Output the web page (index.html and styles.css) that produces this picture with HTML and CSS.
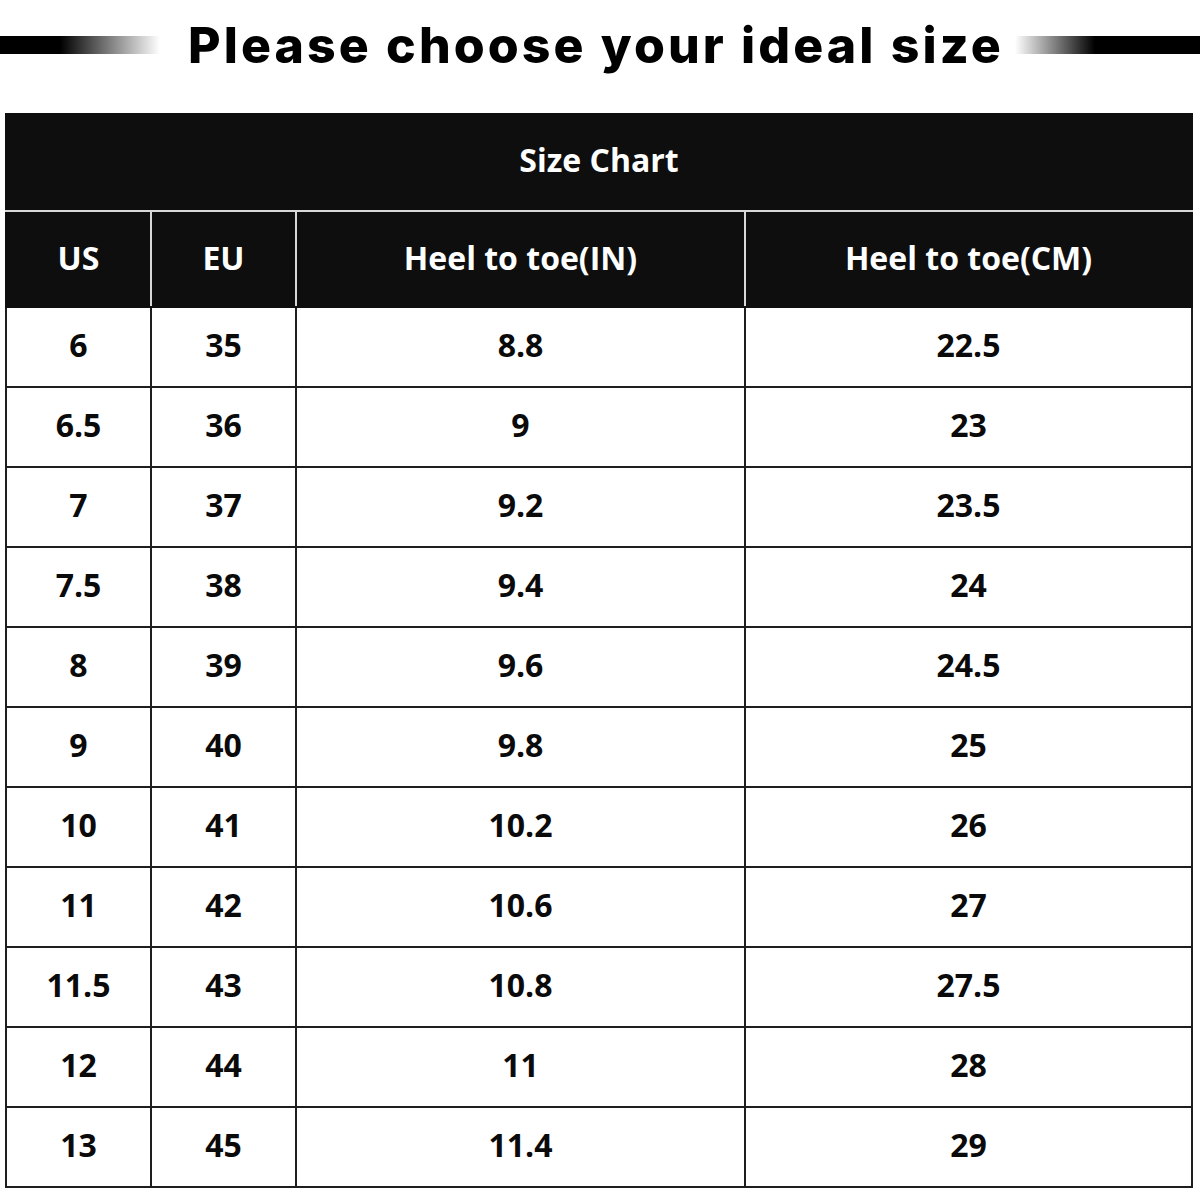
FILE: index.html
```html
<!DOCTYPE html>
<html>
<head>
<meta charset="utf-8">
<link rel="stylesheet" href="styles.css">
</head>
<body>
<div class="heading">
  <div class="bar bar-left"></div>
  <h1 class="title">Please choose your ideal size</h1>
  <div class="bar bar-right"></div>
</div>
<table class="chart">
  <colgroup>
    <col class="c-us"><col class="c-eu"><col class="c-in"><col class="c-cm">
  </colgroup>
  <thead>
    <tr class="caption-row"><th colspan="4">Size Chart</th></tr>
    <tr class="head-row"><th>US</th><th>EU</th><th>Heel to toe(IN)</th><th>Heel to toe(CM)</th></tr>
  </thead>
  <tbody>
    <tr><td>6</td><td>35</td><td>8.8</td><td>22.5</td></tr>
    <tr><td>6.5</td><td>36</td><td>9</td><td>23</td></tr>
    <tr><td>7</td><td>37</td><td>9.2</td><td>23.5</td></tr>
    <tr><td>7.5</td><td>38</td><td>9.4</td><td>24</td></tr>
    <tr><td>8</td><td>39</td><td>9.6</td><td>24.5</td></tr>
    <tr><td>9</td><td>40</td><td>9.8</td><td>25</td></tr>
    <tr><td>10</td><td>41</td><td>10.2</td><td>26</td></tr>
    <tr><td>11</td><td>42</td><td>10.6</td><td>27</td></tr>
    <tr><td>11.5</td><td>43</td><td>10.8</td><td>27.5</td></tr>
    <tr><td>12</td><td>44</td><td>11</td><td>28</td></tr>
    <tr><td>13</td><td>45</td><td>11.4</td><td>29</td></tr>
  </tbody>
</table>
</body>
</html>
```
FILE: styles.css
```css
html, body {
  margin: 0;
  padding: 0;
  background: #ffffff;
}
body {
  width: 1200px;
  height: 1200px;
  overflow: hidden;
}
.heading {
  display: flex;
  align-items: center;
  height: 90px;
  margin-bottom: 23px;
}
.bar {
  height: 18px;
  flex: 0 0 auto;
}
.bar-left {
  width: 160px;
  background: linear-gradient(to right, #000 0, #000 60px, #fff 160px);
}
.bar-right {
  width: 185px;
  margin-left: auto;
  background: linear-gradient(to right, #fff 0, #000 80px, #000 100%);
}
.title {
  margin: 0 0 0 28px;
  font-family: "Inter", "DejaVu Sans", sans-serif;
  font-weight: 800;
  font-size: 50px;
  letter-spacing: 3.1px;
  color: #000;
  white-space: nowrap;
  line-height: 90px;
}
.chart {
  margin-left: 5px;
  width: 1186px;
  border-collapse: collapse;
  table-layout: fixed;
  font-family: "Open Sans", "Noto Sans", sans-serif;
  font-weight: 700;
  font-size: 32px;
  line-height: 40px;
}
.c-us, .c-eu { width: 145px; }
.c-in { width: 449px; }
.c-cm { width: 447px; }
.chart th {
  background: #0e0e0e;
  color: #ffffff;
  font-weight: 700;
  text-align: center;
  border: 2px solid #d8d8d8;
}
.caption-row th {
  height: 90px;
  padding: 0 0 5px 0;
  border-color: #0e0e0e;
  border-bottom-color: #d8d8d8;
}
.head-row th {
  height: 91px;
  padding: 0 0 3px 0;
  border-bottom-color: #0e0e0e;
}
.head-row th:first-child { border-left-color: #0e0e0e; }
.head-row th:last-child { border-right-color: #0e0e0e; }
.chart td {
  height: 74px;
  padding: 0 0 4px 0;
  text-align: center;
  color: #0a0a0a;
  border: 2px solid #1e1e1e;
}
```
